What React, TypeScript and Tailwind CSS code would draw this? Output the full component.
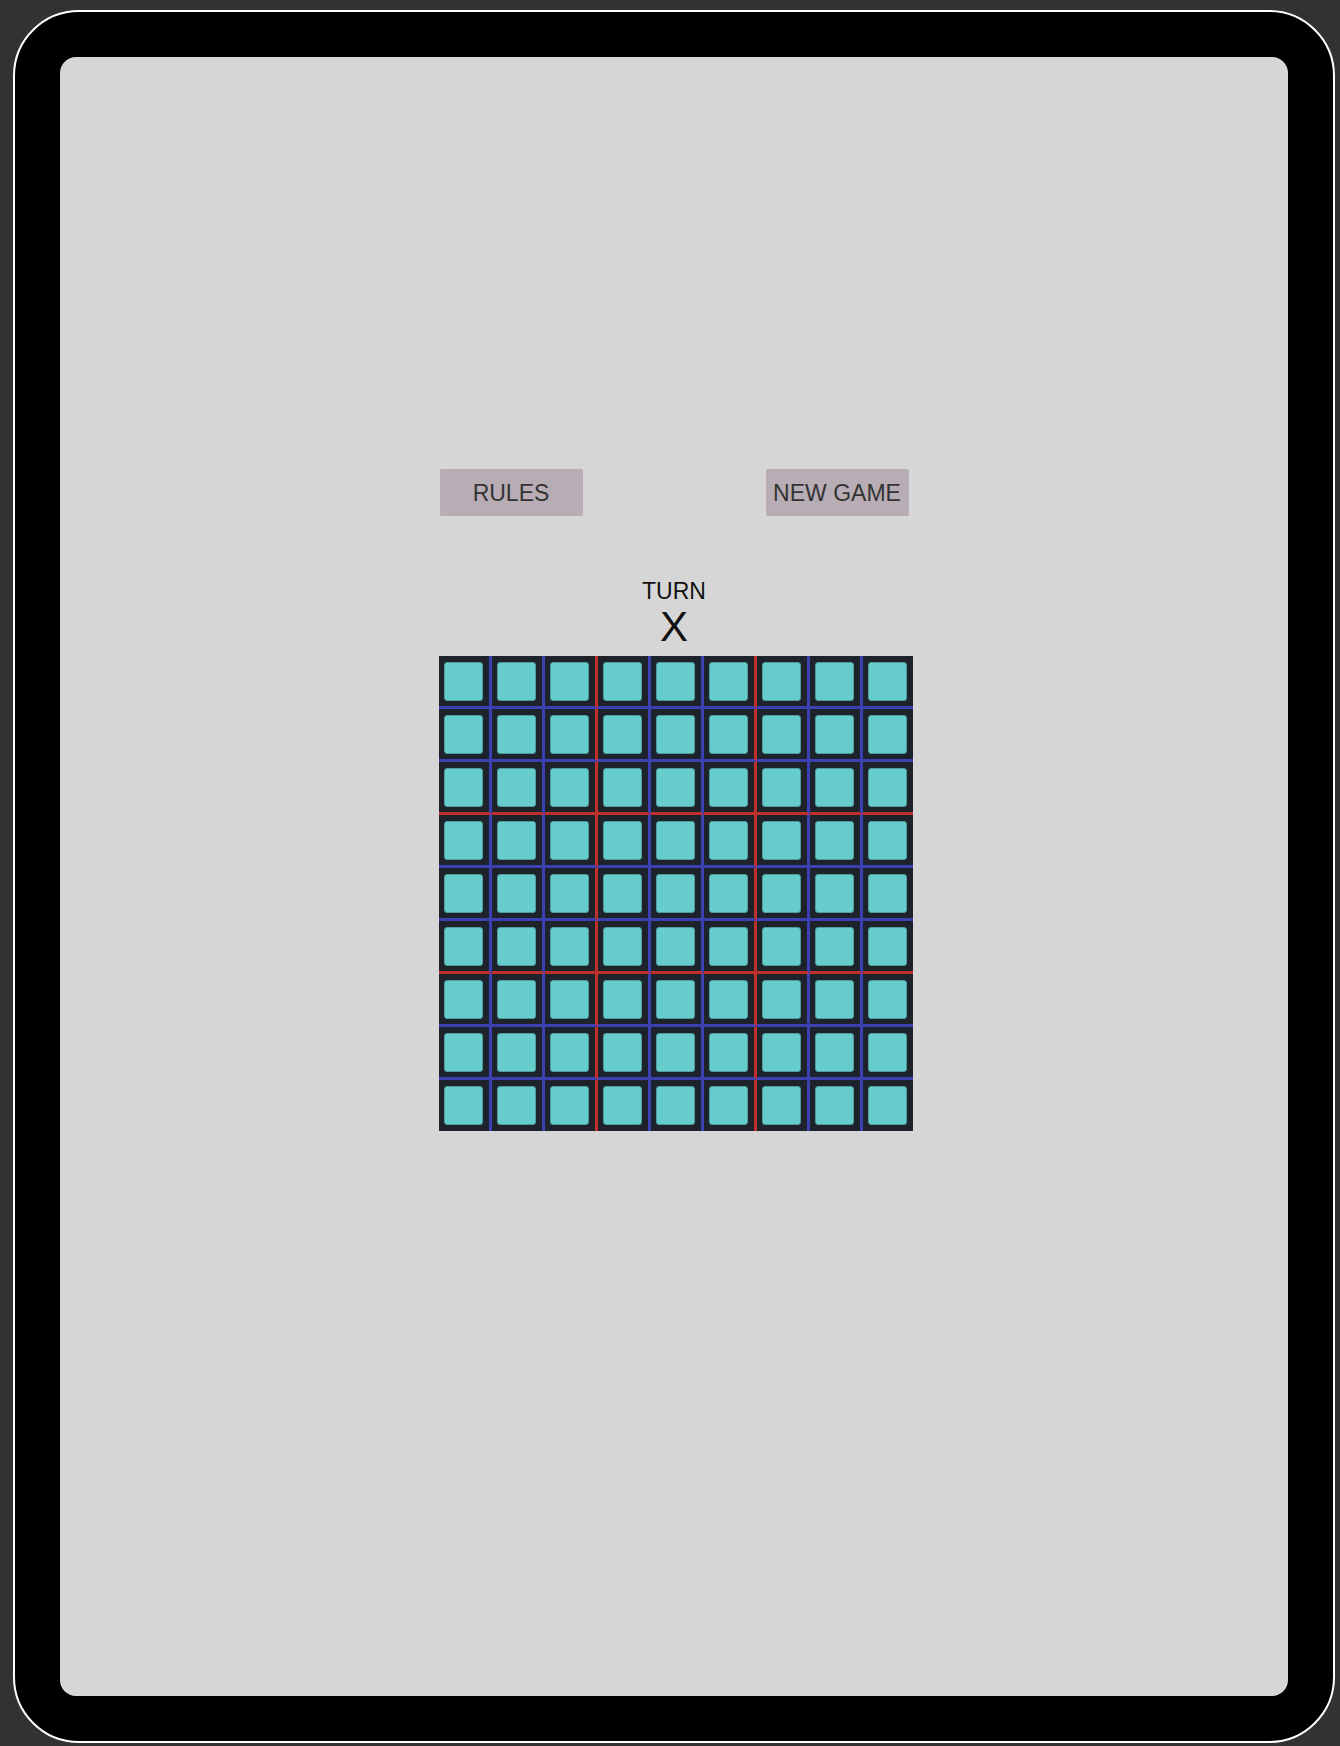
const SIZE = 9;

function slotClass(col: number, row: number) {
  const classes = ["flex", "items-start", "justify-start", "pl-[5px]", "pt-[6px]"];
  if (col === SIZE - 1) {
    classes.push("pr-[6px]");
  } else if (col === 2 || col === 5) {
    classes.push("pr-[6px]", "border-r-[3px]", "border-r-[#c0302b]");
  } else {
    classes.push("pr-[6px]", "border-r-[3px]", "border-r-[#3b41b3]");
  }
  if (row === SIZE - 1) {
    classes.push("pb-[6px]");
  } else if (row === 2 || row === 5) {
    classes.push("pb-[5px]", "border-b-[3px]", "border-b-[#c0302b]");
  } else {
    classes.push("pb-[5px]", "border-b-[3px]", "border-b-[#3b41b3]");
  }
  return classes.join(" ");
}

function Board() {
  const cells = [];
  for (let r = 0; r < SIZE; r++) {
    for (let c = 0; c < SIZE; c++) {
      cells.push(
        <div key={`${r}-${c}`} className={slotClass(c, r)}>
          <button className="w-[39px] h-[39px] rounded-[3px] border border-[#4e9c9c] bg-[#66cccc]" />
        </div>
      );
    }
  }
  return (
    <div className="mt-[8px] ml-[4px] grid grid-cols-[repeat(9,auto)] bg-[#1d222b] w-max">
      {cells}
    </div>
  );
}

export default function App() {
  return (
    <div className="min-h-[1746px] bg-[#323232] pt-[10px] pl-[13px] font-['Liberation_Sans',Arial,sans-serif]">
      <div className="w-[1322px] h-[1733px] rounded-[66px] border-2 border-white bg-black p-[45px]">
        <div className="h-full rounded-[16px] bg-[#d6d6d6] flex flex-col items-center pt-[412px]">
          {/* top buttons */}
          <div className="w-[469px] flex justify-between">
            <button className="w-[143px] h-[47px] pt-[2px] rounded-[2px] bg-[#b8adb4] text-[23px] text-[#333333]">
              RULES
            </button>
            <button className="w-[143px] h-[47px] pt-[2px] rounded-[2px] bg-[#b8adb4] text-[23px] text-[#333333]">
              NEW GAME
            </button>
          </div>

          {/* turn indicator */}
          <div className="mt-[62px] flex flex-col items-center text-[#111111]">
            <div className="text-[23px] leading-[26px]">TURN</div>
            <div className="mt-[2px] text-[42px] leading-[42px]">X</div>
          </div>

          <Board />
        </div>
      </div>
    </div>
  );
}
